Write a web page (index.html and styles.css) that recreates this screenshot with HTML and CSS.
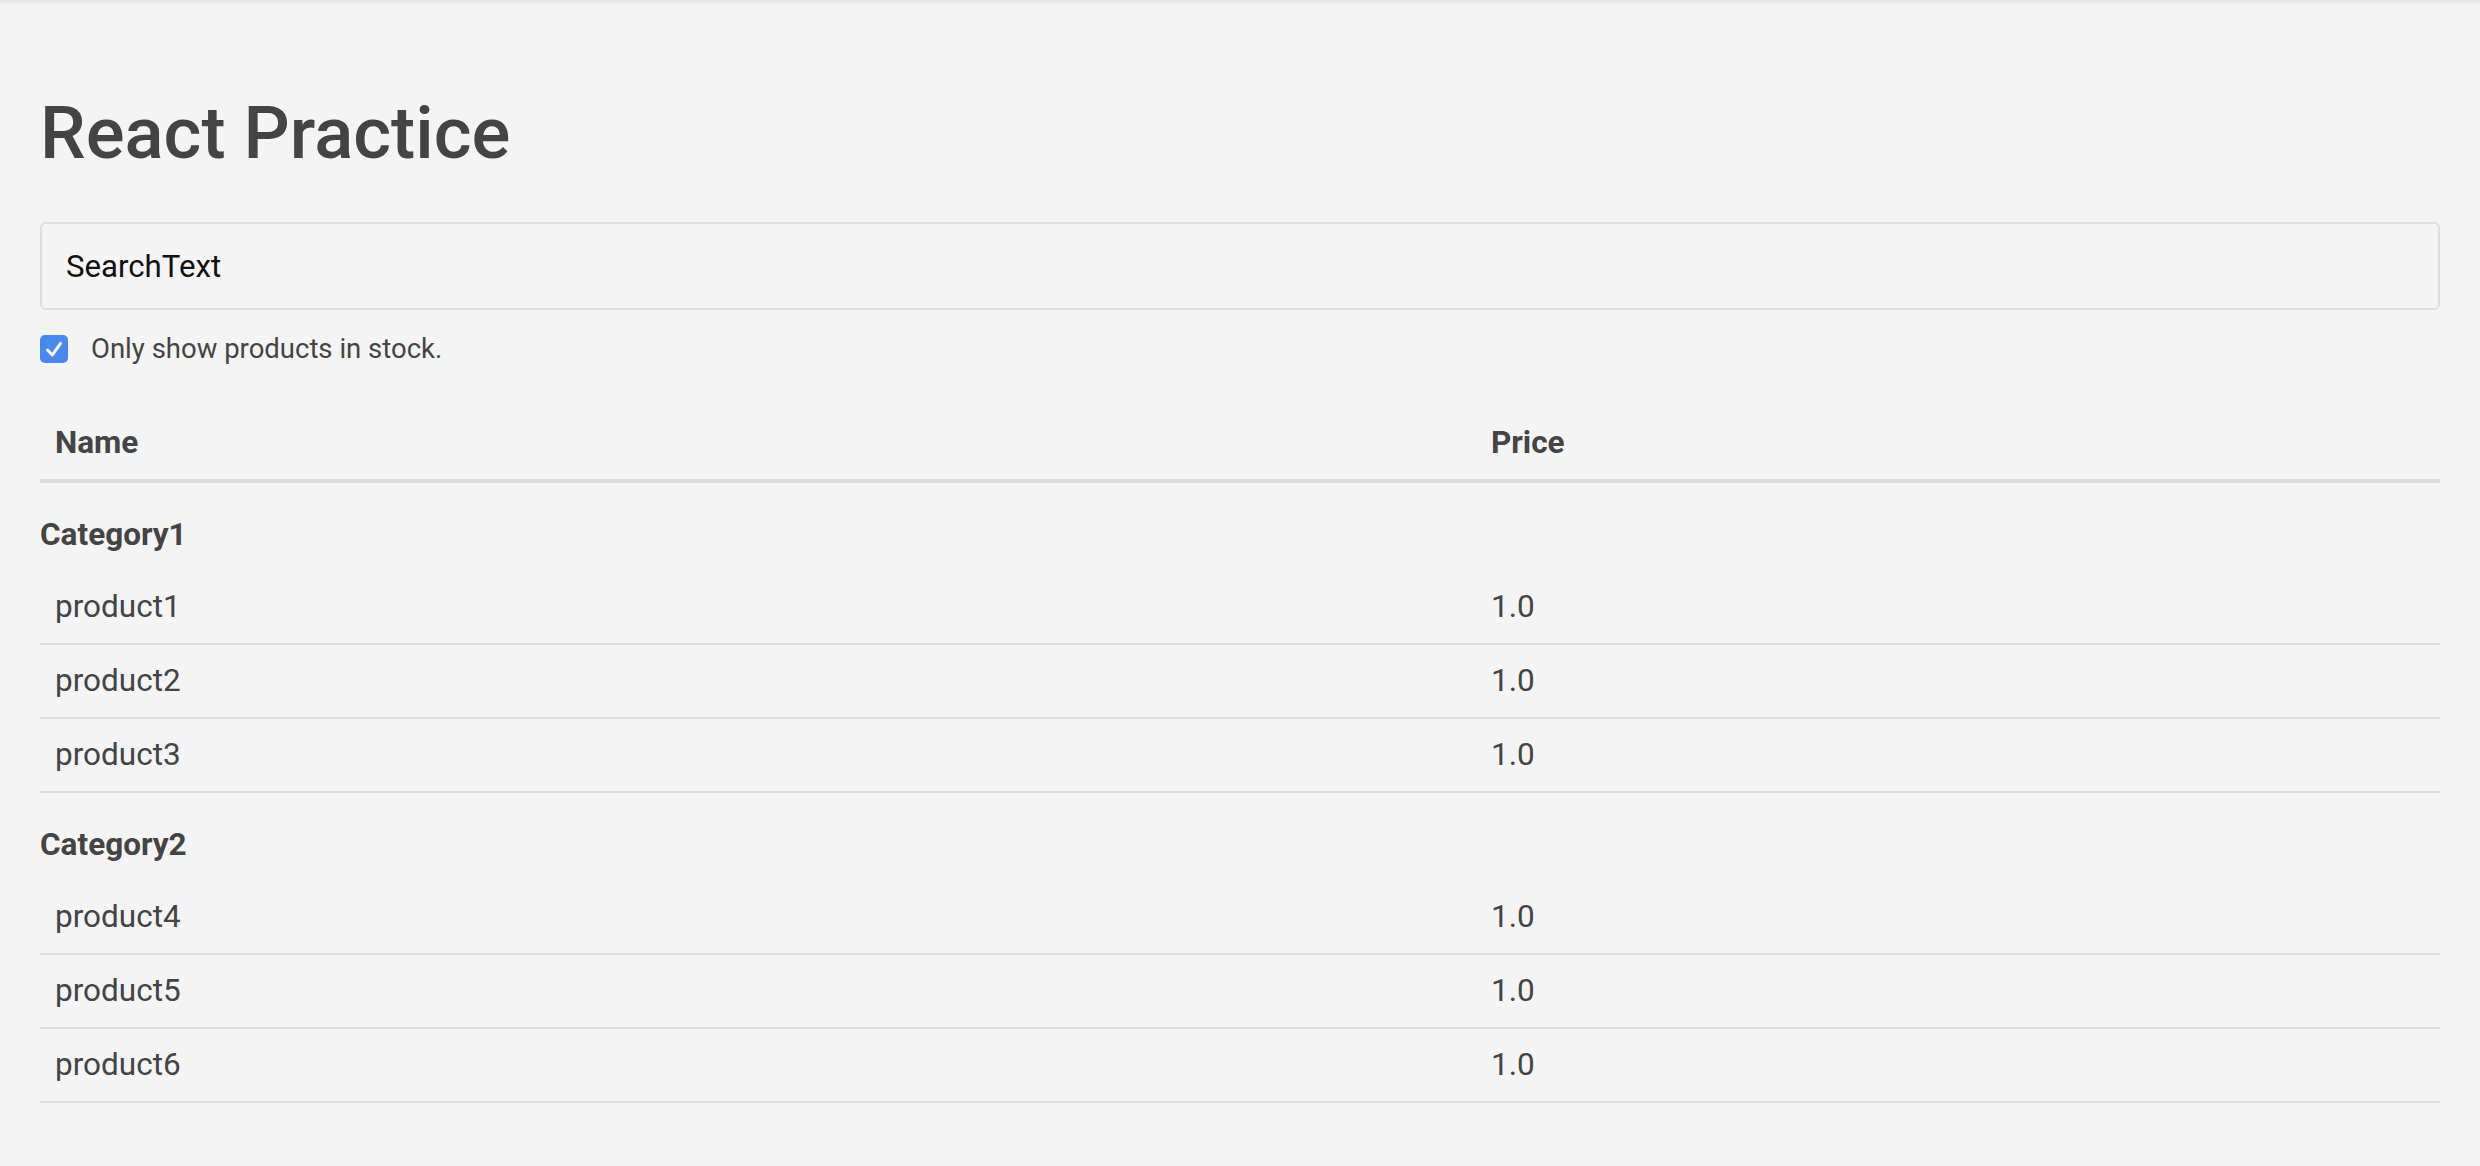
FILE: index.html
```html
<!DOCTYPE html>
<html lang="en">
<head>
<meta charset="utf-8">
<title>React Practice</title>
<link rel="stylesheet" href="styles.css">
</head>
<body>
<div class="page">
  <h1 class="title">React Practice</h1>
  <div class="search">SearchText</div>
  <label class="stock">
    <span class="checkbox">
      <svg viewBox="0 0 28 28" width="28" height="28"><path d="M7.5 15 L12.3 20 L20.5 8.3" fill="none" stroke="#fff" stroke-width="3" stroke-linecap="round" stroke-linejoin="round"/></svg>
    </span>
    <span class="stock-text">Only show products in stock.</span>
  </label>
  <table class="products">
    <thead>
      <tr><th class="col-name">Name</th><th>Price</th></tr>
    </thead>
    <tbody>
      <tr class="cat"><th colspan="2">Category1</th></tr>
      <tr class="item"><td>product1</td><td>1.0</td></tr>
      <tr class="item"><td>product2</td><td>1.0</td></tr>
      <tr class="item"><td>product3</td><td>1.0</td></tr>
      <tr class="cat"><th colspan="2">Category2</th></tr>
      <tr class="item"><td>product4</td><td>1.0</td></tr>
      <tr class="item"><td>product5</td><td>1.0</td></tr>
      <tr class="item"><td>product6</td><td>1.0</td></tr>
    </tbody>
  </table>
</div>
</body>
</html>
```
FILE: styles.css
```css
html, body {
  margin: 0;
  padding: 0;
}
body {
  background: linear-gradient(rgba(0,0,0,0.07), rgba(0,0,0,0) 6px) no-repeat, #f4f4f4;
  font-family: Roboto, "Liberation Sans", sans-serif;
  color: #444;
  min-height: 100vh;
}
.page {
  padding: 1px 40px 0;
}
.title {
  margin: 88px 0 44px;
  font-size: 72.5px;
  line-height: 89px;
  font-weight: 500;
  color: #444;
}
.search {
  box-sizing: border-box;
  height: 88px;
  border: 2px solid #dedede;
  border-radius: 6px;
  padding: 0 24px;
  display: flex;
  align-items: center;
  font-size: 31.2px;
  color: #111;
}
.stock {
  display: flex;
  align-items: center;
  gap: 23px;
  margin-top: 25px;
  height: 28px;
  font-size: 27.5px;
  color: #444;
}
.checkbox {
  width: 28px;
  height: 28px;
  border-radius: 5px;
  background: #4a88ec;
  display: flex;
}
.stock-text {
  position: relative;
  top: -1px;
}
.products {
  width: 100%;
  margin-top: 44px;
  border-collapse: collapse;
  font-size: 31.5px;
  line-height: 44px;
}
.products th,
.products td {
  text-align: left;
  padding: 14px 15px;
}
.products thead th {
  font-weight: 700;
  border-bottom: 4px solid #dcdcdc;
}
.col-name {
  width: 1406px;
}
.products .cat th {
  font-weight: 700;
  padding: 30px 0 14px;
}
.products .item td {
  border-bottom: 2px solid #dcdcdc;
}
```
